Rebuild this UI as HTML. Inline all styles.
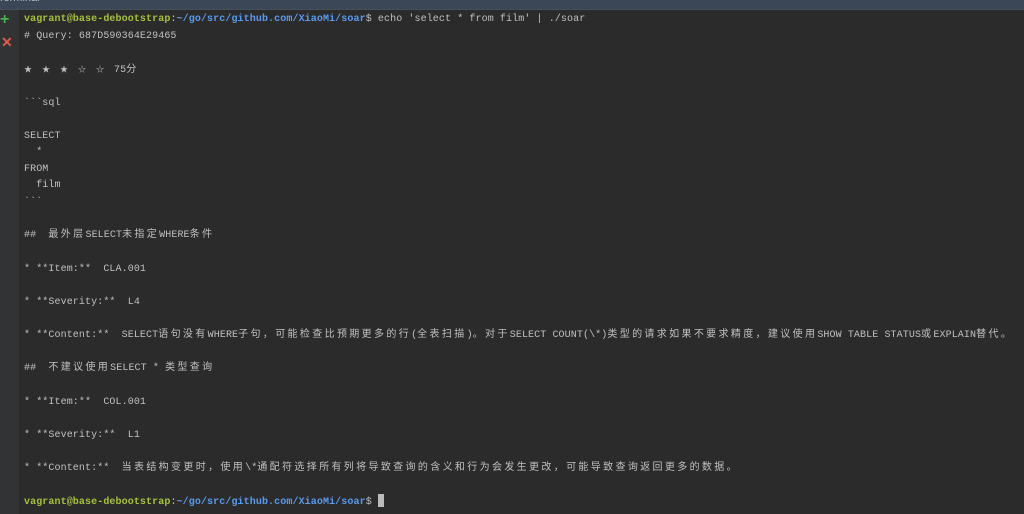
<!DOCTYPE html>
<html><head><meta charset="utf-8"><style>
html,body{margin:0;padding:0;width:1024px;height:514px;overflow:hidden;background:#2b2b2b}
.top{position:absolute;left:0;top:0;width:1024px;height:9px;background:#3b4756;border-bottom:1px solid #46505c}
.top span{position:absolute;left:-2px;top:-8px;font:11px "Liberation Sans",sans-serif;color:#bbb}
.gut{position:absolute;left:0;top:10px;width:19px;height:504px;background:#313335}
.l{position:absolute;left:24px;font-family:"Liberation Mono","Noto Sans CJK SC",monospace;font-size:10px;letter-spacing:0.1px;color:#c0c0c0;white-space:pre;line-height:12px}
.g{color:#a5c23a;font-weight:bold}.b{color:#5a9bef;font-weight:bold}
.c{letter-spacing:2.35px}
.s{font-size:8px;display:inline-block;width:18px}
</style></head><body>
<div class="top"><span>Terminal</span></div>
<div class="gut"></div>
<div style="position:absolute;left:0;top:11px;color:#4caf50;font:bold 16px 'Liberation Sans',sans-serif">+</div>
<div style="position:absolute;left:1px;top:34px;color:#e05a4a;font:bold 14px 'Liberation Sans',sans-serif">✕</div>
<div class="l" style="top:14px"><span class="g">vagrant@base-debootstrap</span>:<span class="b">~/go/src/github.com/XiaoMi/soar</span>$ echo 'select * from film' | ./soar</div>
<div class="l" style="top:31px"># Query: 687D590364E29465</div>
<div class="l" style="top:65px"><span class="s">★</span><span class="s">★</span><span class="s">★</span><span class="s">☆</span><span class="s">☆</span>75<span class="c">分</span></div>
<div class="l" style="top:98px">&#96;&#96;&#96;sql</div>
<div class="l" style="top:131px">SELECT</div>
<div class="l" style="top:147px">  *</div>
<div class="l" style="top:164px">FROM</div>
<div class="l" style="top:180px">  film</div>
<div class="l" style="top:197px">&#96;&#96;&#96;</div>
<div class="l" style="top:230px">##  <span class="c">最外层</span>SELECT<span class="c">未指定</span>WHERE<span class="c">条件</span></div>
<div class="l" style="top:264px">* **Item:**  CLA.001</div>
<div class="l" style="top:297px">* **Severity:**  L4</div>
<div class="l" style="top:330px">* **Content:**  SELECT<span class="c">语句没有</span>WHERE<span class="c">子句，可能检查比预期更多的行</span>(<span class="c">全表扫描</span>)<span class="c">。对于</span>SELECT COUNT(\*)<span class="c">类型的请求如果不要求精度，建议使用</span>SHOW TABLE STATUS<span class="c">或</span>EXPLAIN<span class="c">替代。</span></div>
<div class="l" style="top:363px">##  <span class="c">不建议使用</span>SELECT * <span class="c">类型查询</span></div>
<div class="l" style="top:397px">* **Item:**  COL.001</div>
<div class="l" style="top:430px">* **Severity:**  L1</div>
<div class="l" style="top:463px">* **Content:**  <span class="c">当表结构变更时，使用</span>\*<span class="c">通配符选择所有列将导致查询的含义和行为会发生更改，可能导致查询返回更多的数据。</span></div>
<div class="l" style="top:494px"><span class="g">vagrant@base-debootstrap</span>:<span class="b">~/go/src/github.com/XiaoMi/soar</span>$ <span style="display:inline-block;width:6px;height:13px;background:#bbb;vertical-align:-3px"></span></div>
</body></html>
